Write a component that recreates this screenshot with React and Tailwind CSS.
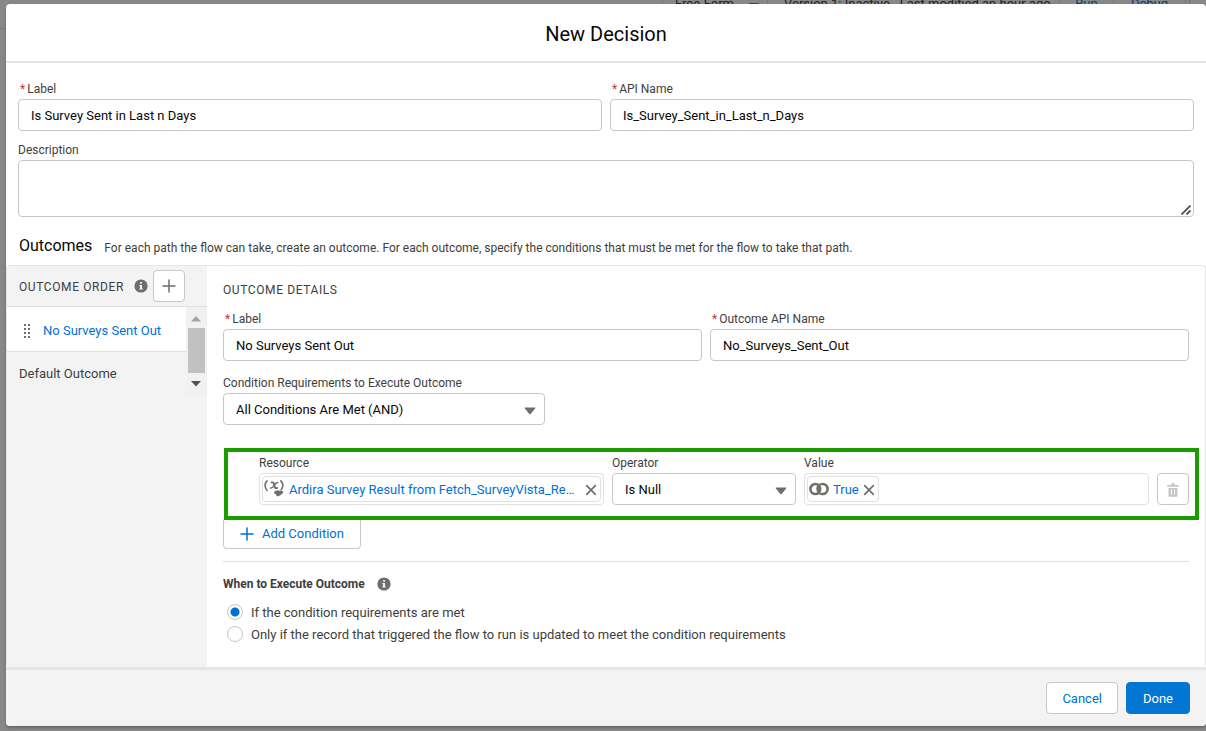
import React, { useState } from "react";

const InfoIcon = () => (
  <svg viewBox="0 0 14 14" className="w-[14px] h-[14px] shrink-0" aria-hidden="true">
    <circle cx="7" cy="7" r="6.6" fill="#706e6b" />
    <rect x="6.1" y="3" width="1.9" height="1.8" rx="0.6" fill="#f3f3f3" />
    <path d="M5.4 5.9H8v3.6h0.8v1H5.2v-1H6V6.9h-0.6z" fill="#f3f3f3" />
  </svg>
);

const PlusIcon = () => (
  <svg viewBox="0 0 14 14" className="w-[14px] h-[14px] shrink-0" aria-hidden="true">
    <path d="M7 1v12M1 7h12" stroke="currentColor" strokeWidth="1.5" strokeLinecap="round" />
  </svg>
);

const CloseIcon = () => (
  <svg viewBox="0 0 12 12" className="w-3 h-3" aria-hidden="true">
    <path d="M1.7 1.7l8.6 8.6M10.3 1.7l-8.6 8.6" stroke="#706e6b" strokeWidth="1.7" strokeLinecap="round" />
  </svg>
);

const VariableIcon = () => (
  <svg viewBox="0 0 20 18" className="w-5 h-[18px] shrink-0" fill="none" stroke="#706e6b" aria-hidden="true">
    <path d="M3 0.9C0.5 3.4 0.5 7.6 3 10.3" strokeWidth="1.6" strokeLinecap="round" />
    <path d="M16.9 0.9c2.3 2.6 2.3 6 0.4 8.6" strokeWidth="1.6" strokeLinecap="round" />
    <path d="M7.6 2.4h1.2c0.7 0 1 0.5 1.2 1.3l0.8 3.4c0.2 0.8 0.6 1.2 1.4 1.1l1-0.3" strokeWidth="1.9" strokeLinecap="round" />
    <path d="M13.8 2.6c-1.5-0.5-2.2 0.7-3.4 2.6S8.1 8.6 6.5 8" strokeWidth="1.4" strokeLinecap="round" />
    <path
      d="M10.2 12.4c0-1.2 1.3-1.9 2.4-1.4 0.5-0.8 1.9-0.9 2.5-0.1 1.6-0.9 4-0.1 4 1.4 0 1.2-0.8 1.9-1.9 2-0.3 1-1.2 1.5-2.2 1.4-0.6 0.7-1.9 0.8-2.4 0-0.6-0.5-0.8-1-0.6-1.6-1 0.1-1.8-0.6-1.8-1.7z"
      fill="#706e6b"
      stroke="none"
    />
  </svg>
);

const BooleanIcon = () => (
  <svg viewBox="0 0 20 14" className="w-5 h-[14px] shrink-0" fill="none" stroke="#706e6b" aria-hidden="true">
    <circle cx="13.6" cy="7" r="5" strokeWidth="2.6" />
    <circle cx="6.4" cy="7" r="5" strokeWidth="2.6" />
    <path d="M11.8 2.8c1.6 2.4 1.6 6 0 8.4" stroke="#fff" strokeWidth="0.8" />
  </svg>
);

const TrashIcon = () => (
  <svg viewBox="0 0 12 14" className="w-3 h-[14px] mt-0.5" aria-hidden="true">
    <path d="M4 2V1.2C4 0.6 4.4 0.3 5 0.3h2c0.6 0 1 0.3 1 0.9V2h3.4c0.6 0 0.6 1.7 0 1.7H0.6C0 3.7 0 2 0.6 2z" fill="#c9c7c5" />
    <path d="M1.5 5h9v7.4c0 0.8-0.5 1.3-1.3 1.3H2.8c-0.8 0-1.3-0.5-1.3-1.3z" fill="#c9c7c5" />
    <path d="M4.5 6.5v5M7.5 6.5v5" stroke="#fff" strokeWidth="1" />
  </svg>
);

const GripIcon = () => (
  <svg viewBox="0 0 8 14" className="w-2 h-[14px] shrink-0" fill="#706e6b" aria-hidden="true">
    {[0, 4, 8, 12].map((y) => (
      <g key={y}>
        <rect x="1" y={y} width="2" height="2" />
        <rect x="5" y={y} width="2" height="2" />
      </g>
    ))}
  </svg>
);

const Field = ({ id, label, value, required }) => (
  <div className="flex-1 min-w-0">
    <label htmlFor={id} className="block h-5 text-xs leading-5 text-[#3e3e3c]">
      {required && <span className="text-[#c23934] mx-0.5">*</span>}
      {label}
    </label>
    <input
      id={id}
      type="text"
      defaultValue={value}
      className="block w-full h-8 px-3 text-[13px] text-[#080707] bg-white border border-[#c9c7c5] rounded"
    />
  </div>
);

const Select = ({ id, label, options }) => (
  <div className="min-w-0">
    <label htmlFor={id} className="block h-5 text-xs leading-5 text-[#3e3e3c]">
      {label}
    </label>
    <div className="relative">
      <select
        id={id}
        className="block w-full h-8 pl-3 pr-8 pt-0.5 text-[13px] text-[#080707] bg-white border border-[#c9c7c5] rounded appearance-none"
      >
        {options.map((option) => (
          <option key={option}>{option}</option>
        ))}
      </select>
      <svg
        viewBox="0 0 12 8"
        className="absolute right-[9px] top-[14px] w-3 h-2 pointer-events-none"
        aria-hidden="true"
      >
        <path d="M1.2 0.5h9.6c0.6 0 0.7 0.5 0.4 0.9L6.6 6.9c-0.3 0.4-0.9 0.4-1.2 0L0.8 1.4C0.5 1 0.6 0.5 1.2 0.5z" fill="#706e6b" />
      </svg>
    </div>
  </div>
);

const Pill = ({ icon, text, full }) => (
  <div
    className={
      full
        ? "w-full min-w-0 h-[26px] pl-px pr-[3px] flex items-center gap-[5px] border border-[#e0e0e0] rounded"
        : "h-[26px] pl-px pr-[3px] flex items-center gap-1 border border-[#e0e0e0] rounded"
    }
  >
    {icon}
    <a href="#" className="flex-1 min-w-0 pt-0.5 truncate text-[13px] text-[#0070d2]">
      {text}
    </a>
    <button type="button" aria-label="Remove" className="shrink-0 pt-0.5">
      <CloseIcon />
    </button>
  </div>
);

const Toolbar = () => (
  <div className="absolute inset-x-0 top-0 h-[29px] border-b border-[#777] text-[13px] text-[#222]">
    <div className="h-[7px] flex items-center justify-end whitespace-nowrap">
      <div className="h-8 w-[105px] pl-3 pr-2 flex items-center justify-between border-l border-[#777]">
        <span>Free-Form</span>
        <span className="w-[10px] h-0.5 bg-[#444]" />
      </div>
      <div className="h-8 w-[292px] px-4 flex items-center gap-2.5 border-l border-[#777]">
        <span>Version 1: Inactive</span>
        <span>Last modified an hour ago</span>
      </div>
      <div className="h-8 w-[54px] flex items-center justify-center border-l border-[#777] text-[#003c71]">
        Run
      </div>
      <div className="h-8 w-[72px] flex items-center justify-center border-l border-[#777] text-[#003c71]">
        Debug
      </div>
      <div className="h-8 w-[5px] border-x border-[#777]" />
      <div className="w-4" />
    </div>
  </div>
);

const Sidebar = () => (
  <div className="w-[200px] shrink-0 bg-[#f3f3f3]">
    <div className="h-[41px] pl-3 pr-[22px] flex items-center border-b border-[#e0e0e0]">
      <h3 className="pt-0.5 text-xs tracking-wider text-[#3e3e3c]">OUTCOME ORDER</h3>
      <span className="ml-auto">
        <InfoIcon />
      </span>
      <button
        type="button"
        aria-label="Add outcome"
        className="w-8 h-8 ml-[5px] flex items-center justify-center bg-white border border-[#c9c7c5] rounded text-[#706e6b]"
      >
        <PlusIcon />
      </button>
    </div>
    <div className="flex">
      <ul className="flex-1 text-[13px]">
        <li className="h-[45px] pl-4 pt-1 flex items-center gap-3 bg-white border-b border-[#e0e0e0]">
          <GripIcon />
          <a href="#" className="text-[#0070d2]">
            No Surveys Sent Out
          </a>
        </li>
        <li className="h-[44px] pl-3 flex items-center text-[#3e3e3c]">Default Outcome</li>
      </ul>
      <div className="w-[21px] h-[88px] pt-[9px] pb-2 pr-px flex flex-col items-center justify-between bg-[#f1f1f1]">
        <svg viewBox="0 0 10 6" className="w-[10px] h-[6px]" aria-hidden="true">
          <path d="M5 0l5 5.5H0z" fill="#a3a3a3" />
        </svg>
        <div className="w-[17px] h-[45px] mb-0.5 bg-[#c1c1c1]" />
        <svg viewBox="0 0 10 6" className="w-[10px] h-[6px]" aria-hidden="true">
          <path d="M5 5.5L10 0H0z" fill="#505050" />
        </svg>
      </div>
    </div>
  </div>
);

const Radio = ({ label, checked, onChange }) => (
  <label className="h-[22px] flex items-center text-[13px] text-[#3e3e3c]">
    <input
      type="radio"
      name="when"
      checked={checked}
      onChange={onChange}
      className="appearance-none w-4 h-4 mr-2 bg-white border border-[#c9c7c5] rounded-full checked:bg-[radial-gradient(circle,#0070d2_4px,transparent_5px)]"
    />
    <span className="pt-0.5">{label}</span>
  </label>
);

const Details = () => {
  const [when, setWhen] = useState(0);
  return (
    <div className="flex-1 min-w-0 pl-4 pr-4 pt-3.5 pb-5">
      <h3 className="h-[18px] text-xs leading-5 tracking-wider text-[#3e3e3c]">OUTCOME DETAILS</h3>
      <div className="flex gap-2 mt-[11px]">
        <Field id="outcome-label" label="Label" value="No Surveys Sent Out" required />
        <Field id="outcome-api" label="Outcome API Name" value="No_Surveys_Sent_Out" required />
      </div>
      <div className="w-1/3 mt-3">
        <Select
          id="requirements"
          label="Condition Requirements to Execute Outcome"
          options={["All Conditions Are Met (AND)", "Any Condition Is Met (OR)"]}
        />
      </div>

      <div className="relative pl-9 mt-7">
        <div className="grid grid-cols-[15fr_8fr_15fr_32px] gap-2 items-end">
          <div className="min-w-0">
            <div className="h-5 text-xs leading-5 text-[#3e3e3c]">Resource</div>
            <div className="h-8 px-0.5 flex items-center bg-white border border-[#e0e0e0] rounded">
              <Pill icon={<VariableIcon />} text="Ardira Survey Result from Fetch_SurveyVista_Results" full />
            </div>
          </div>
          <Select id="operator" label="Operator" options={["Is Null", "Equals"]} />
          <div className="min-w-0">
            <div className="h-5 text-xs leading-5 text-[#3e3e3c]">Value</div>
            <div className="h-8 px-0.5 flex items-center bg-white border border-[#e0e0e0] rounded">
              <Pill icon={<BooleanIcon />} text="True" />
            </div>
          </div>
          <button
            type="button"
            aria-label="Delete condition"
            className="h-8 flex items-center justify-center bg-white border border-[#c9c7c5] rounded"
          >
            <TrashIcon />
          </button>
        </div>
        {/* highlight around the condition row */}
        <div className="absolute left-px -right-[10px] -top-[5px] -bottom-[15px] border-4 border-[#1a9c00] pointer-events-none" />
      </div>

      <button
        type="button"
        className="h-8 mt-3 px-4 pt-0.5 flex items-center gap-2 text-[13px] text-[#0070d2] bg-white border border-[#c9c7c5] rounded"
      >
        <PlusIcon />
        Add Condition
      </button>

      <div className="mt-3 pt-3 border-t border-[#e0e0e0]">
        <div className="h-5 flex items-center gap-3 text-xs font-bold text-[#3e3e3c]">
          When to Execute Outcome
          <InfoIcon />
        </div>
        <div className="mt-[7px] pl-1">
          <Radio label="If the condition requirements are met" checked={when === 0} onChange={() => setWhen(0)} />
          <Radio
            label="Only if the record that triggered the flow to run is updated to meet the condition requirements"
            checked={when === 1}
            onChange={() => setWhen(1)}
          />
        </div>
      </div>
    </div>
  );
};

const App = () => {
  return (
    <div className="relative min-h-screen flex flex-col pt-1 pl-1.5 pb-[5px] overflow-hidden bg-[#888] font-['Roboto','Open_Sans',sans-serif]">
      <Toolbar />
      <div
        role="dialog"
        aria-label="New Decision"
        className="relative flex-1 flex flex-col bg-white rounded shadow-[0_2px_3px_rgba(0,0,0,0.25)]"
      >
        <header className="h-[59px] pt-0.5 flex items-center justify-center border-b-2 border-[#e5e5e5]">
          <h2 className="text-xl text-[#080707]">New Decision</h2>
        </header>

        <div className="flex-1 flex flex-col">
          <div className="px-3 pt-4">
            <div className="flex gap-2">
              <Field id="label" label="Label" value="Is Survey Sent in Last n Days" required />
              <Field id="api" label="API Name" value="Is_Survey_Sent_in_Last_n_Days" required />
            </div>
            <div className="relative mt-[9px]">
              <label htmlFor="description" className="block h-5 text-xs leading-5 text-[#3e3e3c]">
                Description
              </label>
              <textarea
                id="description"
                className="block w-full h-[57px] px-3 py-2 text-[13px] bg-white border border-[#c9c7c5] rounded resize-none"
              />
              <svg viewBox="0 0 10 10" className="absolute right-[3px] bottom-0.5 w-[10px] h-[10px]" aria-hidden="true">
                <path d="M0.5 9.5l9-9M5.5 9.5l4-4" stroke="#505050" strokeWidth="1.8" />
              </svg>
            </div>
          </div>

          <div className="h-12 pl-[13px] pt-2.5 flex items-center gap-3">
            <h2 className="text-base text-[#080707]">Outcomes</h2>
            <p className="pt-1 text-xs text-[#3e3e3c]">
              For each path the flow can take, create an outcome. For each outcome, specify the conditions that must be
              met for the flow to take that path.
            </p>
          </div>

          <div className="flex-1 flex border border-b-0 border-[#e5e5e5] rounded">
            <Sidebar />
            <Details />
          </div>
        </div>

        <footer className="h-[59px] px-4 flex items-center justify-end gap-2 bg-[#f3f3f3] border-t-[3px] border-[#e5e5e5] rounded-b">
          <button
            type="button"
            className="h-8 px-[15px] pt-0.5 text-[13px] text-[#0070d2] bg-white border border-[#c9c7c5] rounded"
          >
            Cancel
          </button>
          <button
            type="button"
            className="h-8 px-4 pt-0.5 text-[13px] text-white bg-[#0176d3] border border-[#0176d3] rounded"
          >
            Done
          </button>
        </footer>
      </div>
    </div>
  );
};

export default App;
